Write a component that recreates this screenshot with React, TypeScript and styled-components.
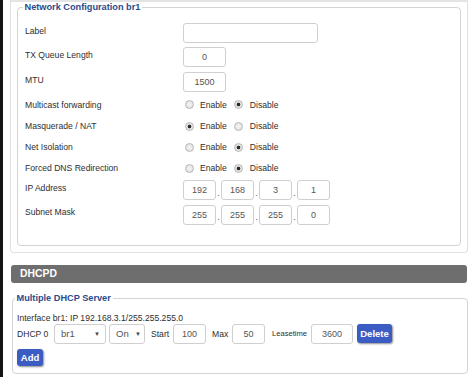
import React from 'react'
import styled, { createGlobalStyle } from 'styled-components'

const GlobalStyle = createGlobalStyle`
  html, body {
    margin: 0;
    padding: 0;
    background: #fff;
  }
  body {
    font-family: "Liberation Sans", Arial, sans-serif;
    color: #333;
    overflow: hidden;
  }
`

const FONT = `"Liberation Sans", Arial, sans-serif`

const Page = styled.div`
  display: flex;
  width: 474px;
  height: 377px;
  overflow: hidden;
`

const Strip = styled.div`
  flex: none;
  width: 3px;
  background: #151515;
`

const Main = styled.div`
  flex: 1;
  display: flex;
  flex-direction: column;
  min-width: 0;
`

const Panel = styled.div`
  margin: 0 6px 0 7px;
  border: 1px solid #e0e0e0;
  border-top: none;
  border-radius: 0 0 4px 4px;
  padding: 0 6px 6px 6px;
`

const TopBand = styled.div`
  height: 2px;
  margin: 0 -6px;
  background: #e4e4e4;
`

const Group = styled.fieldset<{ $pad: string }>`
  margin: 0;
  padding: ${(p) => p.$pad};
  border: 1px solid #d4d4d4;
  border-radius: 4px;
  min-width: 0;
`

const Legend = styled.legend`
  padding: 0 2px;
  margin-left: -2.5px;
  font-size: 9.2px;
  line-height: 10px;
  font-weight: bold;
  color: #2c4b8c;
`

const FieldRow = styled.div<{ $h: number }>`
  display: flex;
  align-items: center;
  height: ${(p) => p.$h}px;
`

const FieldLabel = styled.div<{ $lift?: number }>`
  flex: none;
  width: 158px;
  font-size: 8.6px;
  color: #2e2e2e;
  padding-bottom: ${(p) => p.$lift ?? 0}px;
`

const Field = styled.input<{ $w: number }>`
  box-sizing: border-box;
  flex: none;
  width: ${(p) => p.$w}px;
  height: 20px;
  margin: 0;
  padding: 0;
  border: 1px solid #cfcfcf;
  border-radius: 3px;
  background: #fff;
  font-family: ${FONT};
  font-size: 9px;
  color: #555;
  text-align: center;
  outline: none;
`

const RadioOption = styled.label`
  display: flex;
  align-items: center;
  margin-right: 6px;
  font-size: 8.6px;
  color: #2e2e2e;
`

const RadioMark = styled.span<{ $on?: boolean }>`
  box-sizing: border-box;
  width: 9px;
  height: 9px;
  margin: 0 6.5px 0 1.5px;
  border-radius: 50%;
  border: 1px solid #b8b8b8;
  background: ${(p) =>
    p.$on
      ? 'radial-gradient(circle, #2a2a2a 0 1.4px, #e2e2e2 2.2px)'
      : 'radial-gradient(circle, #f6f6f6 0, #dadada 100%)'};
`

const Octets = styled.div`
  display: flex;
  align-items: center;
`

const Dot = styled.span`
  flex: none;
  width: 5px;
  padding-top: 5px;
  font-size: 9px;
  color: #555;
  text-align: center;
`

const SectionBar = styled.div`
  margin: 12.5px 7px 0 8px;
  height: 18px;
  padding-left: 9px;
  border-radius: 3px;
  background: #6e6e6e;
  color: #fff;
  font-size: 10.4px;
  font-weight: bold;
  line-height: 18px;
`

const ServerGroup = styled(Group)`
  margin: 10px 6px 0 9px;
`

const InfoLine = styled.div`
  font-size: 8.6px;
  line-height: 10px;
  color: #2e2e2e;
`

const DhcpRow = styled.div`
  display: flex;
  align-items: center;
  height: 21px;
`

const Tag = styled.span<{ $w: number; $pl?: number; $size?: number }>`
  flex: none;
  box-sizing: border-box;
  width: ${(p) => p.$w}px;
  padding-left: ${(p) => p.$pl ?? 0}px;
  font-size: ${(p) => p.$size ?? 8.6}px;
  color: #2e2e2e;
  white-space: nowrap;
`

const SelectBox = styled.div<{ $w: number; $pr: number }>`
  box-sizing: border-box;
  flex: none;
  display: flex;
  align-items: center;
  justify-content: space-between;
  width: ${(p) => p.$w}px;
  height: 20px;
  margin-right: 3px;
  padding: 0 ${(p) => p.$pr}px 0 6px;
  border: 1px solid #cfcfcf;
  border-radius: 3px;
  background: #fff;
  font-size: 9.5px;
  color: #555;

  .arrow {
    font-size: 6px;
    color: #444;
  }
`

const ActionButton = styled.button<{ $w: number; $h: number }>`
  flex: none;
  width: ${(p) => p.$w}px;
  height: ${(p) => p.$h}px;
  padding: 0;
  border: none;
  border-radius: 3px;
  background: #3b5cc3;
  color: #fff;
  font-family: "Liberation Sans Narrow", ${FONT};
  font-size: 9.5px;
  font-weight: bold;
  box-shadow: 1px 1px 2px rgba(0, 0, 0, 0.45);
`

const DeleteButton = styled(ActionButton)`
  margin-left: 4px;
`

const AddButton = styled(ActionButton)`
  display: block;
  margin-top: 5px;
`

type Choice = 'enable' | 'disable'

const toggles: { label: string; value: Choice }[] = [
  { label: 'Multicast forwarding', value: 'disable' },
  { label: 'Masquerade / NAT', value: 'enable' },
  { label: 'Net Isolation', value: 'disable' },
  { label: 'Forced DNS Redirection', value: 'disable' },
]
const toggleHeights = [22, 21, 21, 21]

function Toggle({ value }: { value: Choice }) {
  return (
    <>
      <RadioOption>
        <RadioMark $on={value === 'enable'} />
        Enable
      </RadioOption>
      <RadioOption>
        <RadioMark $on={value === 'disable'} />
        Disable
      </RadioOption>
    </>
  )
}

function IpField({ parts }: { parts: string[] }) {
  return (
    <Octets>
      {parts.map((part, i) => (
        <React.Fragment key={i}>
          {i > 0 && <Dot>.</Dot>}
          <Field $w={33} readOnly value={part} />
        </React.Fragment>
      ))}
    </Octets>
  )
}

export default function App() {
  return (
    <Page>
      <GlobalStyle />
      <Strip />
      <Main>
        <Panel>
          <TopBand />
          <Group $pad="8.5px 6px 17px 7px">
            <Legend>Network Configuration br1</Legend>
            <FieldRow $h={24}>
              <FieldLabel $lift={4}>Label</FieldLabel>
              <Field $w={135} readOnly value="" />
            </FieldRow>
            <FieldRow $h={25}>
              <FieldLabel $lift={4}>TX Queue Length</FieldLabel>
              <Field $w={43} readOnly value="0" />
            </FieldRow>
            <FieldRow $h={24}>
              <FieldLabel $lift={3}>MTU</FieldLabel>
              <Field $w={43} readOnly value="1500" />
            </FieldRow>
            {toggles.map((t, i) => (
              <FieldRow key={t.label} $h={toggleHeights[i]}>
                <FieldLabel>{t.label}</FieldLabel>
                <Toggle value={t.value} />
              </FieldRow>
            ))}
            <FieldRow $h={23}>
              <FieldLabel $lift={5}>IP Address</FieldLabel>
              <IpField parts={['192', '168', '3', '1']} />
            </FieldRow>
            <FieldRow $h={26}>
              <FieldLabel $lift={5}>Subnet Mask</FieldLabel>
              <IpField parts={['255', '255', '255', '0']} />
            </FieldRow>
          </Group>
        </Panel>

        <SectionBar>DHCPD</SectionBar>

        <ServerGroup $pad="10px 6px 6.5px 4px">
          <Legend>Multiple DHCP Server</Legend>
          <InfoLine>Interface br1: IP 192.168.3.1/255.255.255.0</InfoLine>
          <DhcpRow>
            <Tag $w={37}>DHCP 0</Tag>
            <SelectBox $w={52} $pr={5}>
              <span>br1</span>
              <span className="arrow">▼</span>
            </SelectBox>
            <SelectBox $w={36} $pr={3}>
              <span>On</span>
              <span className="arrow">▼</span>
            </SelectBox>
            <Tag $w={25} $pl={3}>Start</Tag>
            <Field $w={33} readOnly value="100" />
            <Tag $w={26} $pl={6}>Max</Tag>
            <Field $w={33} readOnly value="50" />
            <Tag $w={46} $pl={7} $size={7.6}>Leasetime</Tag>
            <Field $w={42} readOnly value="3600" />
            <DeleteButton $w={35} $h={19}>Delete</DeleteButton>
          </DhcpRow>
          <AddButton $w={26} $h={17}>Add</AddButton>
        </ServerGroup>
      </Main>
    </Page>
  )
}
